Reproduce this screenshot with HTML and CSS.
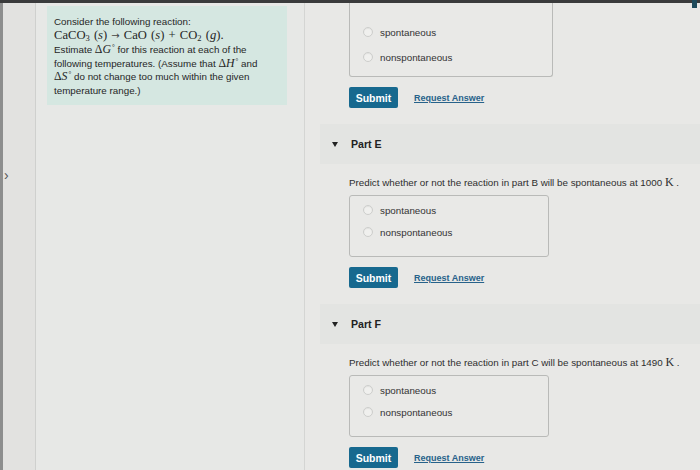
FILE: index.html
```html
<!DOCTYPE html>
<html>
<head>
<meta charset="utf-8">
<link rel="stylesheet" href="styles.css">
</head>
<body>
<div class="topbar"><span class="scroll"></span></div>
<div class="page">
  <div class="edge"></div>
  <div class="sidebar"><span class="chev">&#8250;</span></div>
  <div class="leftcol">
    <div class="info">
      <div class="line">Consider the following reaction:</div>
      <div class="line fline"><span class="math formula">CaCO<sub>3</sub> (<i>s</i>) <span class="arr">&rarr;</span> CaO (<i>s</i>) + CO<sub>2</sub> (<i>g</i>).</span></div>
      <div class="line">Estimate <span class="math">&Delta;<i>G</i><sup>&deg;</sup></span> for this reaction at each of the</div>
      <div class="line">following temperatures. (Assume that <span class="math">&Delta;<i>H</i><sup>&deg;</sup></span> and</div>
      <div class="line"><span class="math">&Delta;<i>S</i><sup>&deg;</sup></span> do not change too much within the given</div>
      <div class="line">temperature range.)</div>
    </div>
  </div>
  <div class="rightcol">
    <div class="answers first">
      <div class="opt"><span class="radio"></span>spontaneous</div>
      <div class="opt"><span class="radio"></span>nonspontaneous</div>
    </div>
    <div class="actions">
      <button class="submit">Submit</button>
      <a class="req">Request Answer</a>
    </div>

    <div class="part">
      <span class="tri"></span><span class="ptitle">Part E</span>
    </div>
    <p class="prompt">Predict whether or not the reaction in part B will be spontaneous at 1000 <span class="k">K</span> .</p>
    <div class="answers">
      <div class="opt"><span class="radio"></span>spontaneous</div>
      <div class="opt"><span class="radio"></span>nonspontaneous</div>
    </div>
    <div class="actions">
      <button class="submit">Submit</button>
      <a class="req">Request Answer</a>
    </div>

    <div class="part">
      <span class="tri"></span><span class="ptitle">Part F</span>
    </div>
    <p class="prompt">Predict whether or not the reaction in part C will be spontaneous at 1490 <span class="k">K</span> .</p>
    <div class="answers">
      <div class="opt"><span class="radio"></span>spontaneous</div>
      <div class="opt"><span class="radio"></span>nonspontaneous</div>
    </div>
    <div class="actions">
      <button class="submit">Submit</button>
      <a class="req">Request Answer</a>
    </div>
  </div>
</div>
</body>
</html>
```
FILE: styles.css
```css
html, body {
  margin: 0;
  padding: 0;
  width: 700px;
  height: 470px;
  overflow: hidden;
  background: #e6e6e4;
  font-family: "Liberation Sans", Arial, sans-serif;
  color: #262626;
}
.topbar {
  height: 3px;
  background: #3a3b3c;
  position: relative;
}
.scroll {
  position: absolute;
  right: 3px;
  top: 0;
  width: 5px;
  height: 8px;
  background: #1e4b5c;
}
.page {
  display: flex;
  height: 467px;
}
.edge {
  width: 3px;
  background: #8d8e8e;
}
.sidebar {
  width: 32px;
  background: #e2e2e0;
  border-right: 1px solid #cfd0ce;
  display: flex;
  flex-direction: column;
}
.chev {
  margin-top: 164px;
  margin-left: 1px;
  font-size: 14px;
  line-height: 16px;
  color: #555;
}
.leftcol {
  width: 268px;
  border-right: 1px solid #d4d5d3;
  background: #e7e8e6;
}
.info {
  margin: 3px 0 0 11px;
  width: 226px;
  height: 87px;
  padding: 9px 7px 3px 7px;
  background: #d5e7e1;
  font-size: 9.8px;
  white-space: nowrap;
}
.line {
  height: 13.4px;
  line-height: 13.4px;
}
.line.fline {
  height: 15px;
  line-height: 15px;
}
.math {
  font-family: "Liberation Serif", "Times New Roman", serif;
  font-size: 11.8px;
  line-height: 0;
}
.math sup {
  font-size: 7px;
  line-height: 0;
  vertical-align: 4px;
  margin-left: 1px;
}
.formula {
  font-size: 12.6px;
  word-spacing: 1px;
}
.formula sub {
  font-size: 8.5px;
  line-height: 0;
  vertical-align: -2px;
}
.arr {
  font-family: "DejaVu Sans", sans-serif;
  font-size: 10px;
  line-height: 0;
  color: #444;
}
.rightcol {
  flex: 1;
  display: flex;
  flex-direction: column;
  padding-left: 44px;
  background: #e8e8e6;
}
.answers {
  margin-top: 6px;
  width: 198px;
  height: 46px;
  padding: 7px 0 7px 0;
  border: 1px solid #b9bab8;
  border-radius: 3px;
  background: #e9e9e7;
  display: flex;
  flex-direction: column;
  gap: 8px;
}
.answers.first {
  margin-top: 0;
  width: 202px;
  border-top: none;
  border-radius: 0 0 3px 3px;
  padding-top: 22px;
  padding-bottom: 6px;
  height: 45px;
  gap: 11px;
}
.answers .opt {
  display: flex;
  align-items: center;
  height: 14px;
  font-size: 9.8px;
  padding-left: 13px;
  color: #333;
}
.radio {
  width: 8px;
  height: 8px;
  border-radius: 50%;
  border: 1px solid #cdcecc;
  background: #f0f0ee;
  margin-right: 7px;
  box-shadow: inset 0 1px 1px rgba(0,0,0,0.06);
}
.actions {
  margin-top: 10px;
  display: flex;
  align-items: center;
  gap: 16px;
}
.submit {
  width: 49px;
  height: 21px;
  border: none;
  border-radius: 2px;
  background: #17698f;
  color: #fff;
  font-family: "Liberation Sans", Arial, sans-serif;
  font-weight: bold;
  font-size: 10.5px;
  padding: 0;
}
.req {
  color: #27628a;
  font-weight: bold;
  font-size: 9px;
  text-decoration: underline;
  text-underline-offset: 1px;
}
.part {
  margin-top: 16px;
  margin-left: -29px;
  height: 40px;
  background: #e3e4e2;
  display: flex;
  align-items: center;
}
.tri {
  width: 0;
  height: 0;
  border-left: 3.5px solid transparent;
  border-right: 3.5px solid transparent;
  border-top: 5px solid #222;
  margin-left: 12px;
}
.ptitle {
  margin-left: 13px;
  font-weight: bold;
  font-size: 10.6px;
  color: #222;
}
.prompt {
  margin: 11px 0 0 0;
  height: 14px;
  line-height: 14px;
  font-size: 9.8px;
  color: #2e2e2e;
  white-space: nowrap;
}
.k {
  font-family: "Liberation Serif", "Times New Roman", serif;
  font-size: 12px;
}
```
